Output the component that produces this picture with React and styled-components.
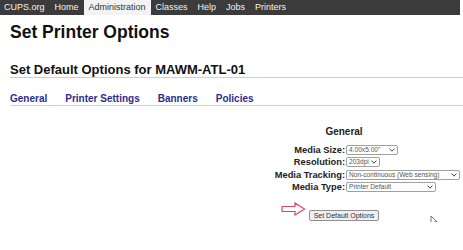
import React from "react";
import styled, { createGlobalStyle } from "styled-components";

const GlobalStyle = createGlobalStyle`
  html, body {
    margin: 0;
    padding: 0;
    background: #ffffff;
    font-family: "Liberation Sans", Arial, sans-serif;
    overflow: hidden;
  }
`;

const navItems = ["CUPS.org", "Home", "Administration", "Classes", "Help", "Jobs", "Printers"];
const tabs = ["General", "Printer Settings", "Banners", "Policies"];
const options = [
  { label: "Media Size:", value: "4.00x5.00\"", width: 52 },
  { label: "Resolution:", value: "203dpi", width: 34 },
  { label: "Media Tracking:", value: "Non-continuous (Web sensing)", width: 114 },
  { label: "Media Type:", value: "Printer Default", width: 90 },
];

const Chevron = () => (
  <svg width="6" height="4" viewBox="0 0 6 4">
    <polyline points="0.6,0.6 3,3.2 5.4,0.6" fill="none" stroke="#444" strokeWidth="1" />
  </svg>
);

const RedArrow = () => (
  <svg width="25" height="14" viewBox="0 0 25 14">
    <path
      d="M1 4.5 H14 V1 L23.5 7 L14 13 V9.5 H1 Z"
      fill="#fff"
      stroke="#e0455e"
      strokeWidth="1.2"
      strokeLinejoin="miter"
    />
  </svg>
);

const Pointer = () => (
  <svg width="8" height="12" viewBox="0 0 8 12">
    <path d="M1 1 V9 L3 7.3 L4.6 10.6 L5.8 10 L4.3 6.8 H7 Z" fill="#fff" stroke="#666" strokeWidth="0.9" />
  </svg>
);

const App = () => {
  return (
    <>
      <GlobalStyle />
      <NavBar>
        {navItems.map((item) => (
          <NavItem key={item} $active={item === "Administration"}>
            {item}
          </NavItem>
        ))}
      </NavBar>

      <Page>
        <Title>Set Printer Options</Title>
        <SubTitle>Set Default Options for MAWM-ATL-01</SubTitle>
        <TabRow>
          {tabs.map((t) => (
            <Tab key={t}>{t}</Tab>
          ))}
        </TabRow>

        <Section>
          <SectionTitle>General</SectionTitle>
          <OptionGrid>
            {options.map((o) => (
              <React.Fragment key={o.label}>
                <Label>{o.label}</Label>
                <SelectCell>
                  <SelectBox style={{ width: o.width }}>
                    <SelectText>{o.value}</SelectText>
                    <Chevron />
                  </SelectBox>
                </SelectCell>
              </React.Fragment>
            ))}
          </OptionGrid>
          <ButtonRow>
            <ButtonWrap>
              <ArrowMark>
                <RedArrow />
              </ArrowMark>
              <SubmitButton>Set Default Options</SubmitButton>
            </ButtonWrap>
          </ButtonRow>
          <Cursor>
            <Pointer />
          </Cursor>
        </Section>
      </Page>
    </>
  );
};

const NavBar = styled.div`
  display: flex;
  width: 460px;
  height: 15px;
  background: #3b3b3b;
`;

const NavItem = styled.div`
  padding: 0 5px;
  font-size: 9px;
  line-height: 15px;
  color: ${(p) => (p.$active ? "#333" : "#f4f4f4")};
  background: ${(p) => (p.$active ? "#f3f3f3" : "transparent")};
  &:first-child {
    padding-left: 4px;
  }
`;

const Page = styled.div`
  padding-left: 10px;
`;

const Title = styled.h1`
  margin: 7px 0 0;
  font-size: 17.5px;
  line-height: 20px;
  font-weight: bold;
  color: #111;
`;

const SubTitle = styled.h2`
  margin: 20px 0 0;
  font-size: 13px;
  line-height: 15px;
  font-weight: bold;
  color: #111;
  border-bottom: 1px solid #cfcfcf;
`;

const TabRow = styled.div`
  display: flex;
  gap: 18px;
  margin-top: 15px;
  border-bottom: 1px solid #cfcfcf;
`;

const Tab = styled.a`
  font-size: 10px;
  line-height: 12px;
  font-weight: bold;
  color: #2c2c8e;
  text-decoration: none;
`;

const Section = styled.div`
  position: relative;
  width: 240px;
  margin: 20px 0 0 214px;
`;

const SectionTitle = styled.div`
  text-align: center;
  font-size: 10px;
  line-height: 12px;
  font-weight: bold;
  color: #222;
`;

const OptionGrid = styled.div`
  display: grid;
  grid-template-columns: 122px 1fr;
  grid-auto-rows: 12.5px;
  margin-top: 5.5px;
`;

const Label = styled.div`
  display: flex;
  align-items: center;
  justify-content: flex-end;
  padding-right: 1px;
  font-size: 9.3px;
  font-weight: bold;
  color: #222;
  white-space: nowrap;
`;

const SelectCell = styled.div`
  display: flex;
  align-items: center;
`;

const SelectBox = styled.div`
  box-sizing: border-box;
  display: flex;
  align-items: center;
  gap: 2px;
  height: 10px;
  padding: 0 2px;
  border: 1px solid #a0a0a0;
  border-radius: 2px;
  flex-shrink: 0;
`;

const SelectText = styled.span`
  flex: 1;
  overflow: hidden;
  font-size: 6.6px;
  line-height: 8px;
  color: #555;
  white-space: nowrap;
`;

const ButtonRow = styled.div`
  display: flex;
  justify-content: center;
  margin-top: 10px;
`;

const ButtonWrap = styled.div`
  position: relative;
`;

const ArrowMark = styled.div`
  position: absolute;
  right: calc(100% + 3px);
  top: -2px;
  line-height: 0;
`;

const SubmitButton = styled.button`
  box-sizing: border-box;
  width: 70px;
  height: 11px;
  padding: 0;
  font-family: "Liberation Sans", Arial, sans-serif;
  font-size: 7px;
  line-height: 9px;
  color: #333;
  background: #efefef;
  border: 1px solid #8f8f8f;
  border-radius: 2px;
`;

const Cursor = styled.div`
  position: absolute;
  left: 206px;
  bottom: -5px;
  line-height: 0;
`;

export default App;
